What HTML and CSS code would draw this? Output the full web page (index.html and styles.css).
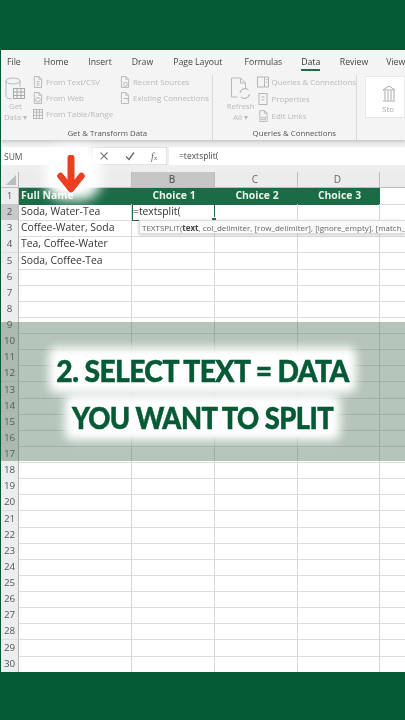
FILE: index.html
```html
<!DOCTYPE html>
<html lang="en">
<head>
<meta charset="utf-8">
<title>TEXTSPLIT</title>
<link rel="stylesheet" href="styles.css">
</head>
<body>
<main class="app">
  <nav class="tabs">
    <span>File</span><span>Home</span><span>Insert</span><span>Draw</span><span>Page Layout</span><span>Formulas</span><span class="active">Data</span><span>Review</span><span>View</span>
  </nav>
  <section class="ribbon">
    <div class="group g-get">
      <div class="group-body">
        <div class="big">
          <svg width="21" height="24" viewBox="0 0 21 24" fill="none" stroke="#b9b9b9"><ellipse cx="8" cy="4" rx="7" ry="3"/><path d="M1 4v15c0 2 3 3 6 3M15 4v6"/><rect x="8.500" y="11.500" width="11" height="10" fill="#f3f3f3" stroke="#a8a8a8"/><path d="M8.500 15h11M8.500 18.500h11M12 12v9M16 12v9" stroke="#a8a8a8"/></svg>
          <span class="big-label">Get<br>Data ▾</span>
        </div>
        <div class="stack s1">
          <div class="item"><svg class="ico" viewBox="0 0 11 13" fill="none" stroke="#b5b5b5"><path d="M1.500.500h5l3 3v9h-8zM6.500.500v3h3"/><path d="M4 6h3M4 8h3M4 10h3"/></svg>From Text/CSV</div>
          <div class="item"><svg class="ico" viewBox="0 0 11 13" fill="none" stroke="#b5b5b5"><path d="M1.500.500h5l3 3v9h-8zM6.500.500v3h3"/><circle cx="5.500" cy="8.500" r="2.500"/></svg>From Web</div>
          <div class="item"><svg class="ico" viewBox="0 0 11 11" fill="none" stroke="#b5b5b5"><rect x=".5" y=".5" width="10" height="10"/><path d="M.5 3.500h10M.5 7h10M4 .5v10M7 .5v10"/></svg>From Table/Range</div>
        </div>
        <div class="stack s2">
          <div class="item"><svg class="ico" viewBox="0 0 11 13" fill="none" stroke="#b5b5b5"><path d="M1.500.500h5l3 3v9h-8zM6.500.500v3h3"/><circle cx="6" cy="9" r="2.200"/></svg>Recent Sources</div>
          <div class="item"><svg class="ico" viewBox="0 0 11 13" fill="none" stroke="#b5b5b5"><path d="M1.500.500h5l3 3v9h-8zM6.500.500v3h3M4 7h5v3"/></svg>Existing Connections</div>
        </div>
      </div>
      <div class="group-label">Get &amp; Transform Data</div>
    </div>
    <div class="group g-query">
      <div class="group-body">
        <div class="big refresh">
          <svg width="21" height="24" viewBox="0 0 21 24" fill="none" stroke="#b9b9b9"><path d="M1.500 1h9l5 5v5M1.500 1v19h6M10.500 1v5h5"/><path d="M10 16a5 5 0 0 1 8.500-3M19.500 17a5 5 0 0 1-8.500 3" stroke="#a8a8a8"/></svg>
          <span class="big-label">Refresh<br>All ▾</span>
        </div>
        <div class="stack s3">
          <div class="item"><svg class="ico wide" viewBox="0 0 12 11" fill="none" stroke="#b5b5b5"><rect x=".5" y=".5" width="11" height="10"/><path d="M7.500.5v10M9 3h1.500M9 5.500h1.500"/></svg>Queries &amp; Connections</div>
          <div class="item"><svg class="ico wide" viewBox="0 0 12 12" fill="none" stroke="#b5b5b5"><rect x="2" y=".5" width="8" height="11"/><path d="M4.500 4h3M4.500 7h3"/></svg>Properties</div>
          <div class="item"><svg class="ico wide" viewBox="0 0 12 13" fill="none" stroke="#b5b5b5"><path d="M2.500.500h5l3 3v9h-8zM7.500.500v3h3"/><path d="M4.500 8h4v2.500h-4z"/></svg>Edit Links</div>
        </div>
      </div>
      <div class="group-label">Queries &amp; Connections</div>
    </div>
    <div class="group g-stock">
      <div class="stock-box">
        <svg width="14" height="18" viewBox="0 0 14 18" fill="none" stroke="#a8a8a8"><path d="M1 5 7 1l6 4zM1 16h12M3 6v9M6 6v9M9 6v9M12 6v9"/></svg>
        <span>Sto</span>
      </div>
    </div>
  </section>
  <section class="formula-bar">
    <div class="name-box">SUM</div>
    <div class="fx-box">
      <svg class="fx-icon" width="10" height="10" viewBox="0 0 10 10" fill="none" stroke="#666" stroke-width="1.100"><path d="M1.500 1.500l7 7M8.500 1.500l-7 7"/></svg>
      <svg class="fx-icon" width="10" height="10" viewBox="0 0 10 10" fill="none" stroke="#666" stroke-width="1.300"><path d="M1 5.500l3 3 5-7"/></svg>
      <span class="fx-f"><i>f</i><small>x</small></span>
    </div>
    <div class="formula">=textsplit(</div>
  </section>
  <section class="sheet">
    <div class="row head"><div class="rh corner"><span class="tri"></span></div><div class="c a"></div><div class="c b sel">B</div><div class="c">C</div><div class="c d">D</div><div class="c e">E</div></div>
    <div class="row title"><div class="rh">1</div><div class="c a">Full Name</div><div class="c b">Choice 1</div><div class="c">Choice 2</div><div class="c d">Choice 3</div><div class="c e"></div></div>
    <div class="row"><div class="rh rsel">2</div><div class="c a">Soda, Water-Tea</div><div class="c b active-cell">=textsplit(</div><div class="c"></div><div class="c d"></div><div class="c e"></div></div>
    <div class="row"><div class="rh">3</div><div class="c a">Coffee-Water, Soda</div><div class="c b"></div><div class="c"></div><div class="c d"></div><div class="c e"></div></div>
    <div class="row"><div class="rh">4</div><div class="c a">Tea, Coffee-Water</div><div class="c b"></div><div class="c"></div><div class="c d"></div><div class="c e"></div></div>
    <div class="row"><div class="rh">5</div><div class="c a">Soda, Coffee-Tea</div><div class="c b"></div><div class="c"></div><div class="c d"></div><div class="c e"></div></div>
    <div class="row"><div class="rh">6</div><div class="c a"></div><div class="c b"></div><div class="c"></div><div class="c d"></div><div class="c e"></div></div>
    <div class="row"><div class="rh">7</div><div class="c a"></div><div class="c b"></div><div class="c"></div><div class="c d"></div><div class="c e"></div></div>
    <div class="row"><div class="rh">8</div><div class="c a"></div><div class="c b"></div><div class="c"></div><div class="c d"></div><div class="c e"></div></div>
    <div class="row"><div class="rh">9</div><div class="c a"></div><div class="c b"></div><div class="c"></div><div class="c d"></div><div class="c e"></div></div>
    <div class="row"><div class="rh">10</div><div class="c a"></div><div class="c b"></div><div class="c"></div><div class="c d"></div><div class="c e"></div></div>
    <div class="row"><div class="rh">11</div><div class="c a"></div><div class="c b"></div><div class="c"></div><div class="c d"></div><div class="c e"></div></div>
    <div class="row"><div class="rh">12</div><div class="c a"></div><div class="c b"></div><div class="c"></div><div class="c d"></div><div class="c e"></div></div>
    <div class="row"><div class="rh">13</div><div class="c a"></div><div class="c b"></div><div class="c"></div><div class="c d"></div><div class="c e"></div></div>
    <div class="row"><div class="rh">14</div><div class="c a"></div><div class="c b"></div><div class="c"></div><div class="c d"></div><div class="c e"></div></div>
    <div class="row"><div class="rh">15</div><div class="c a"></div><div class="c b"></div><div class="c"></div><div class="c d"></div><div class="c e"></div></div>
    <div class="row"><div class="rh">16</div><div class="c a"></div><div class="c b"></div><div class="c"></div><div class="c d"></div><div class="c e"></div></div>
    <div class="row"><div class="rh">17</div><div class="c a"></div><div class="c b"></div><div class="c"></div><div class="c d"></div><div class="c e"></div></div>
    <div class="row"><div class="rh">18</div><div class="c a"></div><div class="c b"></div><div class="c"></div><div class="c d"></div><div class="c e"></div></div>
    <div class="row"><div class="rh">19</div><div class="c a"></div><div class="c b"></div><div class="c"></div><div class="c d"></div><div class="c e"></div></div>
    <div class="row"><div class="rh">20</div><div class="c a"></div><div class="c b"></div><div class="c"></div><div class="c d"></div><div class="c e"></div></div>
    <div class="row"><div class="rh">21</div><div class="c a"></div><div class="c b"></div><div class="c"></div><div class="c d"></div><div class="c e"></div></div>
    <div class="row"><div class="rh">22</div><div class="c a"></div><div class="c b"></div><div class="c"></div><div class="c d"></div><div class="c e"></div></div>
    <div class="row"><div class="rh">23</div><div class="c a"></div><div class="c b"></div><div class="c"></div><div class="c d"></div><div class="c e"></div></div>
    <div class="row"><div class="rh">24</div><div class="c a"></div><div class="c b"></div><div class="c"></div><div class="c d"></div><div class="c e"></div></div>
    <div class="row"><div class="rh">25</div><div class="c a"></div><div class="c b"></div><div class="c"></div><div class="c d"></div><div class="c e"></div></div>
    <div class="row"><div class="rh">26</div><div class="c a"></div><div class="c b"></div><div class="c"></div><div class="c d"></div><div class="c e"></div></div>
    <div class="row"><div class="rh">27</div><div class="c a"></div><div class="c b"></div><div class="c"></div><div class="c d"></div><div class="c e"></div></div>
    <div class="row"><div class="rh">28</div><div class="c a"></div><div class="c b"></div><div class="c"></div><div class="c d"></div><div class="c e"></div></div>
    <div class="row"><div class="rh">29</div><div class="c a"></div><div class="c b"></div><div class="c"></div><div class="c d"></div><div class="c e"></div></div>
    <div class="row"><div class="rh">30</div><div class="c a"></div><div class="c b"></div><div class="c"></div><div class="c d"></div><div class="c e"></div></div>
    <div class="tooltip">TEXTSPLIT(<b>text</b>, col_delimiter, [row_delimiter], [ignore_empty], [match_</div>
  </section>
  <div class="arrow-glow"></div>
  <svg class="arrow" width="28" height="38" viewBox="0 0 28 38"><path d="M14 3v30" stroke="#ec3f22" stroke-width="7" stroke-linecap="round" fill="none"/><path d="M3.500 21l10.500 13 10.500-13" stroke="#ec3f22" stroke-width="6.500" stroke-linecap="round" stroke-linejoin="round" fill="none"/></svg>
  <div class="band">
    <div class="caption">2. SELECT TEXT = DATA</div>
    <div class="caption second">YOU WANT TO SPLIT</div>
  </div>
</main>
</body>
</html>
```
FILE: styles.css
```css
* { box-sizing: border-box; }
html, body { margin: 0; height: 100%; }
body {
  width: 405px;
  height: 720px;
  overflow: hidden;
  background: #045a35;
  font-family: "Open Sans", "Liberation Sans", sans-serif;
  padding-top: 50px;
  padding-left: 1px;
}
.app {
  position: relative;
  width: 404px;
  height: 622px;
  background: #fff;
  overflow: hidden;
  filter: blur(0.35px);
}
.tabs {
  height: 24px;
  background: #f4f4f4;
  display: flex;
  align-items: center;
  padding: 0 0 0 6px;
  font-size: 8.7px;
  color: #444;
  white-space: nowrap;
}
.tabs span { margin-right: 21px; position: relative; }
.tabs span:nth-child(2) { margin-left: 2px; margin-right: 20px; }
.tabs span:nth-child(3) { margin-right: 20px; }
.tabs span:nth-child(4) { margin-right: 20px; }
.tabs span:nth-child(5) { margin-right: 22px; }
.tabs span:nth-child(6) { margin-right: 19px; }
.tabs span:nth-child(7) { margin-right: 19.500px; }
.tabs span:nth-child(8) { margin-right: 18px; }
.tabs .active { color: #333; }
.tabs .active::after {
  content: "";
  position: absolute;
  left: 0;
  right: 0;
  bottom: -3px;
  height: 2px;
  background: #1d6b47;
}
.ribbon {
  height: 66px;
  background: #f4f4f4;
  display: flex;
  box-shadow: 0 2px 3px rgba(0,0,0,.16);
  position: relative;
  z-index: 1;
  color: #b9b9b9;
  font-size: 7.9px;
  white-space: nowrap;
}
.group { display: flex; flex-direction: column; }
.g-get { width: 220px; border-right: 1px solid #d9d9d9; margin: 1px 0 0; padding-left: 2px; }
.g-query { width: 148px; border-right: 1px solid #d9d9d9; margin: 1px 0 0; padding-left: 16px; }
.g-stock { flex: 1; padding: 2px 0 0 8px; }
.group-body { flex: 1; display: flex; }
.group-label {
  height: 14px;
  line-height: 14px;
  color: #555;
  font-size: 7.8px;
  text-align: center;
}
.g-query .group-label { margin-left: 4px; }
.big {
  width: 25px;
  display: flex;
  flex-direction: column;
  align-items: center;
  padding-top: 2px;
}
.refresh { width: 24px; }
.big-label { text-align: center; line-height: 10.500px; font-size: 7.8px; }
.stack { display: flex; flex-direction: column; }
.s1 { gap: 3px; margin-left: 5px; width: 87px; }
.s2 { gap: 3px; margin-left: 0; }
.s3 { gap: 4px; margin-left: 4px; }
.item { display: flex; align-items: center; height: 13px; }
.ico { width: 10px; height: 12px; margin-right: 3px; flex: none; }
.ico.wide { width: 12px; margin-right: 3px; }
.stock-box {
  width: 40px;
  height: 42px;
  background: #fff;
  border: 1px solid #e8e8e8;
  display: flex;
  flex-direction: column;
  padding: 8px 0 0 16px;
  color: #aaa;
  font-size: 8px;
}
.formula-bar {
  height: 32px;
  background: #eeeeee;
  display: flex;
  align-items: flex-start;
  padding-top: 7px;
  font-size: 8.5px;
  color: #555;
  white-space: nowrap;
}
.name-box {
  width: 87px;
  height: 18px;
  line-height: 19px;
  background: #fff;
  padding-left: 3px;
}
.fx-box {
  width: 75px;
  height: 18px;
  margin-left: 4px;
  background: #fff;
  display: flex;
  align-items: center;
  padding-left: 6px;
  gap: 16px;
  color: #666;
  border: 1px solid #e2e2e2;
}
.fx-icon { flex: none; }
.fx-f { font-family: "Liberation Serif", serif; font-size: 10px; }
.fx-f small { font-size: 7px; }
.formula {
  flex: 1;
  height: 18px;
  line-height: 18px;
  margin-left: 2px;
  background: #fff;
  padding-left: 10px;
  color: #444;
}
.sheet { position: relative; }
.row {
  display: grid;
  grid-template-columns: 18px 113px 83px 83px 82px 82px;
  height: 16.130px;
  font-size: 10.400px;
  color: #333;
  white-space: nowrap;
}
.rh {
  background: #ededed;
  color: #555;
  font-family: "Open Sans", sans-serif;
  font-size: 9.8px;
  line-height: 16px;
  text-align: center;
  border-right: 1px solid #b8b8b8;
  border-bottom: 1px solid #dcdcdc;
}
.rsel { background: #c9c9c9; }
.c {
  border-right: 1px solid #d8d8d8;
  border-bottom: 1px solid #dddddd;
  padding-left: 2px;
  line-height: 15px;
  overflow: visible;
}
.head { height: 16px; }
.head .c {
  background: #ececec;
  color: #666;
  text-align: center;
  font-size: 10px;
  padding-left: 0;
  padding-right: 2px;
  border-right: 1px solid #bdbdbd;
  border-bottom: 1px solid #bdbdbd;
}
.head .sel { background: #c6c6c6; color: #444; }
.corner { position: relative; border-bottom: 1px solid #bdbdbd; }
.tri {
  position: absolute;
  right: 2px;
  bottom: 2px;
  border-style: solid;
  border-width: 0 0 10px 10px;
  border-color: transparent transparent #bcbcbc transparent;
}
.title .c {
  background: #1b6b47;
  color: #e8f3ec;
  font-weight: 700;
  text-align: center;
  border-color: #1b6b47;
}
.title .a { text-align: left; }
.title .e { background: #fff; border-color: #d8d8d8; }
.active-cell {
  border: 1.500px solid #1d6b47;
  padding-left: 0;
  line-height: 13px;
  letter-spacing: -0.050px;
  position: relative;
}
.active-cell::after {
  content: "";
  position: absolute;
  right: -3px;
  bottom: -3px;
  width: 4px;
  height: 4px;
  background: #1d6b47;
  border: 0.500px solid #fff;
}
.tooltip {
  position: absolute;
  left: 138px;
  top: 48px;
  width: 266px;
  height: 14px;
  line-height: 13px;
  padding-left: 2px;
  background: #fafafa;
  border: 1px solid #dcdcdc;
  border-right: 0;
  box-shadow: 0 1px 3px rgba(0,0,0,.22);
  font-size: 8px;
  color: #666;
  white-space: nowrap;
}
.tooltip b { color: #444; }
.arrow-glow {
  position: absolute;
  left: 44px;
  top: 96px;
  width: 56px;
  height: 54px;
  border-radius: 20px;
  background: #fff;
  filter: blur(6px);
  z-index: 2;
}
.arrow {
  position: absolute;
  left: 56px;
  top: 105px;
  z-index: 3;
}
.band {
  position: absolute;
  left: 0;
  right: 0;
  top: 272px;
  height: 139px;
  background: rgba(70,110,85,.4);
  display: flex;
  flex-direction: column;
  align-items: center;
  padding-top: 32px;
  gap: 15px;
  z-index: 4;
}
.caption {
  position: relative;
  font-family: Lato, "Liberation Sans", sans-serif;
  font-weight: 900;
  font-size: 30px;
  line-height: 32px;
  height: 32px;
  letter-spacing: -0.600px;
  color: #045a35;
  -webkit-text-stroke: 0.5px #045a35;
  white-space: nowrap;
  transform: scaleX(.94);
  z-index: 0;
}
.caption.second { transform: scaleX(.91); }
.caption::before {
  content: "";
  position: absolute;
  inset: -7px -8px;
  background: #fff;
  border-radius: 8px;
  filter: blur(5px);
  z-index: -1;
}
```
